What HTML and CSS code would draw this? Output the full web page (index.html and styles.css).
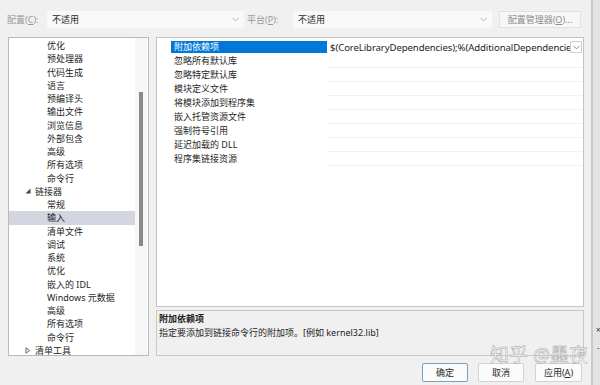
FILE: index.html
```html
<!DOCTYPE html>
<html lang="zh-CN">
<head>
<meta charset="utf-8">
<link rel="stylesheet" href="styles.css">
</head>
<body>
<div class="screen">
  <div class="dialog">
    <div class="topbar">
      <span class="lbl lbl1">配置(<u>C</u>):</span>
      <div class="combo combo1"><span>不适用</span><svg class="chev" width="7" height="5" viewBox="0 0 7 5"><path d="M0.5 0.8 L3.5 3.8 L6.5 0.8" fill="none" stroke="#a8a8a8" stroke-width="0.9"/></svg></div>
      <span class="lbl lbl2">平台(<u>P</u>):</span>
      <div class="combo combo2"><span>不适用</span><svg class="chev" width="7" height="5" viewBox="0 0 7 5"><path d="M0.5 0.8 L3.5 3.8 L6.5 0.8" fill="none" stroke="#a8a8a8" stroke-width="0.9"/></svg></div>
      <div class="btn-top">配置管理器(<u>O</u>)...</div>
    </div>
    <div class="content">
      <div class="tree">
        <ul class="tree-list">
          <li class="l2">优化</li>
          <li class="l2">预处理器</li>
          <li class="l2">代码生成</li>
          <li class="l2">语言</li>
          <li class="l2">预编译头</li>
          <li class="l2">输出文件</li>
          <li class="l2">浏览信息</li>
          <li class="l2">外部包含</li>
          <li class="l2">高级</li>
          <li class="l2">所有选项</li>
          <li class="l2">命令行</li>
          <li class="l1"><svg class="exp" width="6" height="6" viewBox="0 0 6 6"><path d="M5.5 0.5 L5.5 5.5 L0.5 5.5 Z" fill="#444"/></svg>链接器</li>
          <li class="l2">常规</li>
          <li class="l2 sel">输入</li>
          <li class="l2">清单文件</li>
          <li class="l2">调试</li>
          <li class="l2">系统</li>
          <li class="l2">优化</li>
          <li class="l2">嵌入的 IDL</li>
          <li class="l2">Windows 元数据</li>
          <li class="l2">高级</li>
          <li class="l2">所有选项</li>
          <li class="l2">命令行</li>
          <li class="l1"><svg class="exp" width="6" height="7" viewBox="0 0 6 7"><path d="M1 0.8 L4.6 3.5 L1 6.2 Z" fill="none" stroke="#555" stroke-width="0.9"/></svg>清单工具</li>
        </ul>
        <div class="vscroll"><div class="thumb"></div></div>
      </div>
      <div class="rightcol">
        <div class="grid">
          <div class="row first">
            <div class="gutter"></div>
            <div class="name">附加依赖项</div>
            <div class="value"><span class="vtext">$(CoreLibraryDependencies);%(AdditionalDependencies)</span><span class="ddbtn"><svg width="7" height="5" viewBox="0 0 7 5"><path d="M0.5 0.8 L3.5 3.8 L6.5 0.8" fill="none" stroke="#777" stroke-width="0.9"/></svg></span></div>
          </div>
          <div class="row"><div class="gutter"></div><div class="name">忽略所有默认库</div><div class="value"></div></div>
          <div class="row"><div class="gutter"></div><div class="name">忽略特定默认库</div><div class="value"></div></div>
          <div class="row"><div class="gutter"></div><div class="name">模块定义文件</div><div class="value"></div></div>
          <div class="row"><div class="gutter"></div><div class="name">将模块添加到程序集</div><div class="value"></div></div>
          <div class="row"><div class="gutter"></div><div class="name">嵌入托管资源文件</div><div class="value"></div></div>
          <div class="row"><div class="gutter"></div><div class="name">强制符号引用</div><div class="value"></div></div>
          <div class="row"><div class="gutter"></div><div class="name">延迟加载的 DLL</div><div class="value"></div></div>
          <div class="row"><div class="gutter"></div><div class="name">程序集链接资源</div><div class="value"></div></div>
        </div>
        <div class="desc">
          <div class="desc-title">附加依赖项</div>
          <div class="desc-text">指定要添加到链接命令行的附加项。[例如 kernel32.lib]</div>
        </div>
      </div>
    </div>
    <div class="buttons">
      <div class="btn default">确定</div>
      <div class="btn">取消</div>
      <div class="btn">应用(<u>A</u>)</div>
    </div>
  </div>
  <div class="edge">
    <span class="edge-x">×</span>
    <span class="edge-dash">-</span>
  </div>
  <div class="watermark">知乎 @墨夜</div>
</div>
</body>
</html>
```

FILE: styles.css
```css
* { box-sizing: border-box; }
html, body { margin: 0; padding: 0; }
body {
  width: 600px;
  height: 385px;
  overflow: hidden;
  background: #f0f0f0;
  font-family: "Noto Sans", "Noto Sans CJK SC", sans-serif;
  font-size: 9px;
  color: #1e1e1e;
}
u { text-decoration: underline; text-underline-offset: 1px; }
.screen {
  position: relative;
  display: flex;
  width: 600px;
  height: 385px;
}
.dialog {
  width: 591px;
  height: 385px;
  display: flex;
  flex-direction: column;
}
.topbar {
  display: flex;
  align-items: center;
  height: 17px;
  margin-top: 11px;
  padding-left: 7px;
}
.lbl { color: #9a9a9a; white-space: nowrap; }
.lbl1 { width: 40px; }
.lbl2 { width: 46px; margin-left: 3px; }
.combo {
  height: 17px;
  background: #f9f9f9;
  display: flex;
  align-items: center;
  justify-content: space-between;
  padding: 0 5px 0 5px;
  color: #2a2a2a;
}
.combo1 { width: 197px; }
.combo2 { width: 199px; }
.chev { display: block; }
.btn-top {
  margin-left: 7px;
  width: 82px;
  height: 17px;
  background: #f7f7f7;
  border: 1px solid #e2e2e2;
  color: #8c8c8c;
  display: flex;
  align-items: center;
  justify-content: center;
  white-space: nowrap;
}
.content {
  display: flex;
  margin-top: 9px;
  padding-left: 8px;
  height: 319px;
  gap: 7px;
}
.tree {
  width: 141px;
  height: 319px;
  border: 1px solid #b9b9b9;
  background: #fff;
  display: flex;
  overflow: hidden;
}
.tree-list {
  list-style: none;
  margin: 0;
  padding: 1px 0 0 0;
  width: 126px;
}
.tree-list li {
  height: 13.25px;
  line-height: 13.25px;
  white-space: nowrap;
  display: flex;
  align-items: center;
}
.tree-list .l2 { padding-left: 38px; }
.tree-list .l1 { padding-left: 16px; }
.tree-list .exp { margin-right: 4px; flex: none; }
.tree-list .sel { background: #d3d5e1; }
.vscroll {
  width: 12px;
  background: #f6f6f6;
  position: relative;
}
.thumb {
  position: absolute;
  left: 4px;
  top: 54px;
  width: 4px;
  height: 154px;
  background: #8a8a8a;
}
.rightcol {
  width: 428px;
  display: flex;
  flex-direction: column;
  gap: 3px;
}
.grid {
  height: 270px;
  border: 1px solid #c4c4c4;
  background: #fff;
  padding-top: 2px;
}
.row {
  display: grid;
  grid-template-columns: 14px 156px 1fr;
  height: 14px;
}
.row .name {
  line-height: 14px;
  padding-left: 3px;
  white-space: nowrap;
}
.row .value {
  border-bottom: 1px solid #f1f1f1;
  display: flex;
  align-items: center;
  overflow: hidden;
}
.row.first .name {
  background: #0078d7;
  color: #fff;
  margin: 1px 0;
  line-height: 12px;
}
.row.first .value { border-bottom: none; }
.vtext {
  flex: 1;
  min-width: 0;
  overflow: hidden;
  white-space: nowrap;
  padding-left: 3px;
  color: #1e1e1e;
  font-size: 9.6px;
  letter-spacing: -0.1px;
}
.ddbtn {
  flex: none;
  width: 12px;
  height: 12px;
  margin-right: 1px;
  border: 1px solid #cfcfcf;
  background: #fff;
  display: flex;
  align-items: center;
  justify-content: center;
}
.desc {
  height: 46px;
  border: 1px solid #c8c8c8;
  background: #f0f0f0;
  padding: 1px 2px;
}
.desc-title { font-weight: bold; line-height: 14px; }
.desc-text { line-height: 14px; }
.buttons {
  display: flex;
  justify-content: flex-end;
  gap: 10px;
  margin-top: 7px;
  padding-right: 9px;
}
.btn {
  width: 46px;
  height: 19px;
  border: 1px solid #d2d2d2;
  border-radius: 2px;
  background: #fbfbfb;
  display: flex;
  align-items: center;
  justify-content: center;
  color: #2a2a2a;
}
.btn:last-child { width: 47px; margin-left: 1px; }
.btn.default { border-color: #7a9fc2; }
.edge {
  width: 9px;
  height: 385px;
  border-left: 2px solid #c9c9c9;
  background: #e4e4e4;
  position: relative;
  overflow: hidden;
}
.edge-x {
  position: absolute;
  left: 3px;
  top: 324px;
  font-size: 8px;
  color: #333;
}
.edge-dash {
  position: absolute;
  left: 4px;
  top: 342px;
  font-size: 8px;
  color: #555;
}
.watermark {
  position: absolute;
  left: 490px;
  top: 342px;
  font-size: 19px;
  line-height: 26px;
  color: rgba(255, 255, 255, 0.9);
  -webkit-text-stroke: 0.5px #a4a4a4;
  white-space: nowrap;
  letter-spacing: 0px;
}
```
